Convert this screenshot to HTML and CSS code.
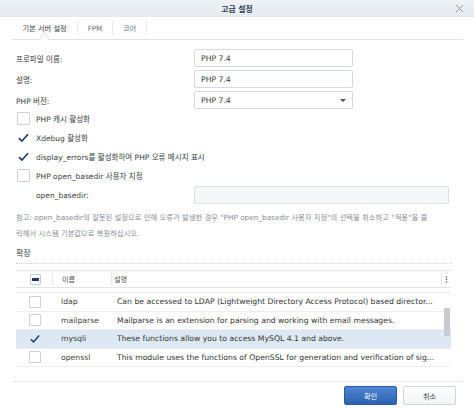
FILE: index.html
```html
<!DOCTYPE html>
<html lang="ko">
<head>
<meta charset="utf-8">
<link rel="stylesheet" href="styles.css">
</head>
<body>
<div class="dialog">
  <div class="titlebar">
    <span class="title">고급 설정</span>
    <svg class="close" width="9" height="9" viewBox="0 0 9 9"><path d="M1 1L8 8M8 1L1 8" stroke="#8d98a4" stroke-width="1" fill="none"/></svg>
  </div>
  <div class="tabs">
    <div class="tab active">기본 서버 설정</div>
    <div class="tab t2">FPM</div>
    <div class="tab t3">코어</div>
  </div>
  <div class="form">
    <div class="row"><div class="label">프로파일 이름:</div><div class="input">PHP 7.4</div></div>
    <div class="row"><div class="label">설명:</div><div class="input">PHP 7.4</div></div>
    <div class="row row-last"><div class="label">PHP 버전:</div><div class="input select">PHP 7.4<span class="arrow"></span></div></div>
    <div class="check-row"><span class="cb"></span><span class="ctext">PHP 캐시 활성화</span></div>
    <div class="check-row"><span class="cb checked"><svg width="14" height="12" viewBox="0 0 14 12"><path d="M1.2 6.2L5 10L12.8 1.2" stroke="#1d3a6c" stroke-width="2" fill="none"/></svg></span><span class="ctext">Xdebug 활성화</span></div>
    <div class="check-row"><span class="cb checked"><svg width="14" height="12" viewBox="0 0 14 12"><path d="M1.2 6.2L5 10L12.8 1.2" stroke="#1d3a6c" stroke-width="2" fill="none"/></svg></span><span class="ctext">display_errors를 활성화하여 PHP 오류 메시지 표시</span></div>
    <div class="check-row"><span class="cb"></span><span class="ctext">PHP open_basedir 사용자 지정</span></div>
    <div class="row sub"><div class="label sublabel">open_basedir:</div><div class="input wide disabled"></div></div>
    <div class="note">
      <span class="line">참고: open_basedir의 잘못된 설정으로 인해 오류가 발생한 경우 "PHP open_basedir 사용자 지정"의 선택을 취소하고 "적용"을 클</span>
      <span class="line">릭해서 시스템 기본값으로 복원하십시오.</span>
    </div>
    <div class="section">확장</div>
  </div>
  <div class="table">
    <div class="thead">
      <div class="c1"><span class="cb ind"><span class="bar"></span></span></div>
      <div class="c2">이름</div>
      <div class="c3">설명</div>
      <div class="c4"><svg width="3" height="7" viewBox="0 0 3 7"><circle cx="1.5" cy="1" r="0.8" fill="#555"/><circle cx="1.5" cy="3.5" r="0.8" fill="#555"/><circle cx="1.5" cy="6" r="0.8" fill="#555"/></svg></div>
    </div>
    <div class="tbody">
      <div class="tr partial"></div>
      <div class="tr"><div class="c1"><span class="cb"></span></div><div class="c2">ldap</div><div class="c3">Can be accessed to LDAP (Lightweight Directory Access Protocol) based director...</div></div>
      <div class="tr"><div class="c1"><span class="cb"></span></div><div class="c2">mailparse</div><div class="c3">Mailparse is an extension for parsing and working with email messages.</div></div>
      <div class="tr selected"><div class="c1"><span class="cb checked"><svg width="14" height="12" viewBox="0 0 14 12"><path d="M1.2 6.2L5 10L12.8 1.2" stroke="#1d3a6c" stroke-width="2" fill="none"/></svg></span></div><div class="c2">mysqli</div><div class="c3">These functions allow you to access MySQL 4.1 and above.</div></div>
      <div class="tr"><div class="c1"><span class="cb"></span></div><div class="c2">openssl</div><div class="c3">This module uses the functions of OpenSSL for generation and verification of sig...</div></div>
      <div class="thumb"></div>
    </div>
  </div>
  <div class="footer">
    <button class="btn primary">확인</button>
    <button class="btn">취소</button>
  </div>
</div>
</body>
</html>
```
FILE: styles.css
```css
* { box-sizing: border-box; }
html, body { margin: 0; padding: 0; }
body {
  width: 474px;
  height: 410px;
  overflow: hidden;
  background: #fff;
  font-family: "DejaVu Sans", "Noto Sans CJK KR", sans-serif;
  font-size: 7.5px;
  color: #333;
}
.titlebar {
  height: 17px;
  background: linear-gradient(#eef2f6, #e4eaf0);
  display: flex;
  align-items: center;
  justify-content: center;
  position: relative;
}
.title { font-size: 7.8px; font-weight: bold; color: #2c3c4e; }
.close { position: absolute; right: 10px; top: 4px; }
.tabs {
  margin: 0 11px 0 12px;
  height: 23px;
  border-bottom: 1px solid #dfe4ea;
  display: flex;
  align-items: center;
}
.tab {
  height: 14px;
  display: flex;
  align-items: center;
  justify-content: center;
  border-right: 1px solid #e6e9ed;
  color: #6a747f;
  position: relative;
  font-size: 7.2px;
}
.tab.active { width: 66px; color: #3a4654; }
.tab.t2 { width: 35px; }
.tab.t3 { width: 34px; }
.tab.active::after {
  content: "";
  position: absolute;
  left: 29px;
  bottom: -6px;
  width: 6px;
  height: 6px;
  background: #fff;
  border-left: 1px solid #dfe4ea;
  border-top: 1px solid #dfe4ea;
  transform: rotate(45deg);
}
.form { padding: 9px 0 0 16px; }
.row { display: flex; align-items: center; height: 18px; margin-bottom: 3px; }
.row-last { margin-bottom: 0; }
.label { width: 178px; color: #3a3f45; }
.input {
  width: 159px;
  height: 18px;
  border: 1px solid #d4dae0;
  border-radius: 2px;
  padding-left: 6px;
  display: flex;
  align-items: center;
  color: #333;
  font-size: 7.7px;
  position: relative;
}
.select .arrow {
  position: absolute;
  right: 6px;
  top: 7px;
  width: 0; height: 0;
  border-left: 3px solid transparent;
  border-right: 3px solid transparent;
  border-top: 3px solid #555;
}
.check-row { display: flex; align-items: center; height: 19px; }
.cb {
  width: 13px;
  height: 13px;
  border: 1px solid #cdd2d8;
  border-radius: 1px;
  background: #fff;
  display: inline-flex;
  align-items: center;
  justify-content: center;
  flex: none;
}
.check-row .cb { margin-left: 1px; }
.cb.checked { border-color: transparent; background: transparent; }
.ctext { margin-left: 6px; color: #3a3f45; }
.row.sub { margin-top: 1px; margin-bottom: 0; }
.sublabel { padding-left: 20px; }
.input.wide { width: 255px; }
.input.disabled { background: #f6f7f9; border-color: #dde1e6; }
.note { margin-top: 6px; color: #8a9096; line-height: 16px; font-size: 7.3px; }
.note .line { display: block; white-space: nowrap; }
.section {
  margin-top: 5px;
  margin-right: 22px;
  height: 17px;
  line-height: 14px;
  font-size: 8px;
  color: #3a4048;
  border-bottom: 1px dotted #cfd4d9;
}
.table { margin: 6px 23px 0 16px; }
.thead {
  height: 18px;
  border-top: 1px solid #e2e6ea;
  border-bottom: 1px solid #e2e6ea;
  display: flex;
  align-items: center;
}
.c1 { width: 36px; display: flex; justify-content: center; align-items: center; padding-left: 2px; }
.c2 { width: 59px; padding-left: 9px; }
.c3 { flex: 1; padding-left: 6px; white-space: nowrap; overflow: hidden; }
.thead .c2, .thead .c3 { border-left: 1px solid #e6e9ed; height: 12px; display: flex; align-items: center; font-size: 7.2px; }
.thead .c2 { color: #555; }
.thead .c3 { padding-left: 2px; color: #555; }
.c4 { width: 10px; height: 12px; border-left: 1px solid #e6e9ed; display: flex; align-items: center; justify-content: center; }
.cb.ind { width: 11px; height: 11px; border-color: #c9ced4; }
.cb.ind .bar { width: 7px; height: 3px; background: #1d3a6c; }
.tbody { position: relative; height: 84px; }
.tr {
  height: 18.5px;
  border-bottom: 1px solid #eceff2;
  display: flex;
  align-items: center;
  font-size: 7.7px;
}
.tr.partial { height: 5px; }
.tr .cb { width: 12px; height: 12px; }
.tr .c2 { color: #444; }
.tr .c3 { color: #333; }
.tr.selected { background: #dde8f5; }
.thumb {
  position: absolute;
  right: 1px;
  top: 20px;
  width: 6px;
  height: 28px;
  background: #c8cbcf;
  border-radius: 1px;
}
.footer {
  margin: 9px 11px 0 12px;
  border-top: 1px solid #e3e7eb;
  padding: 4px 7px 0 0;
  display: flex;
  justify-content: flex-end;
  gap: 6px;
}
.btn {
  width: 53px;
  height: 19px;
  border: 1px solid #cfd5db;
  border-radius: 2px;
  background: linear-gradient(#ffffff, #f1f3f5);
  font-family: "DejaVu Sans", "Noto Sans CJK KR", sans-serif;
  font-size: 7.2px;
  color: #3a3f45;
  padding: 0;
}
.btn.primary {
  background: linear-gradient(#4d86d2, #2c62b0);
  border-color: #2a5aa2;
  color: #fff;
}
```
